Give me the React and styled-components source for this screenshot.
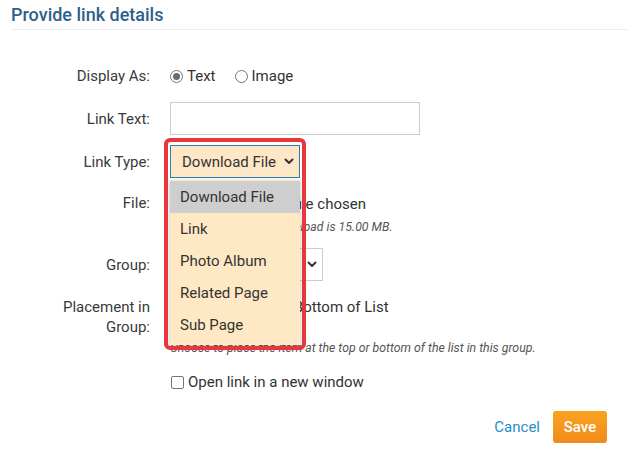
import React from 'react'
import styled, { createGlobalStyle } from 'styled-components'

const linkTypes = ['Download File', 'Link', 'Photo Album', 'Related Page', 'Sub Page']

const Chevron = () => (
  <svg width="10" height="7" viewBox="0 0 10 7">
    <path d="M1.5 1.5 L5 5 L8.5 1.5" fill="none" stroke="#333" strokeWidth="2" strokeLinecap="round" strokeLinejoin="round" />
  </svg>
)

const Radio = ({ checked, label }) => (
  <RadioLabel>
    <RadioDot $checked={checked} />
    {label}
  </RadioLabel>
)

export default () => {
  return (
    <Page>
      <GlobalStyle />
      <Header>
        <Title>Provide link details</Title>
      </Header>

      <Row $top={36} $align="center">
        <Label>Display As:</Label>
        <Inline $gap={19}>
          <Radio checked label="Text" />
          <Radio label="Image" />
        </Inline>
      </Row>

      <Row $top={16} $align="center">
        <Label>Link Text:</Label>
        <TextInput />
      </Row>

      <Row $top={10} $align="center">
        <Label>Link Type:</Label>
        <SelectWrap>
          <Select $width={130} $focused>
            <span>Download File</span>
            <Chevron />
          </Select>
          <Menu>
            {linkTypes.map((t, i) => (
              <MenuItem key={t} $active={i === 0}>{t}</MenuItem>
            ))}
          </Menu>
          <Highlight />
        </SelectWrap>
      </Row>

      <Row $top={15} $align="start">
        <Label>File:</Label>
        <div>
          <Inline $gap={7}>
            <FileButton>Choose File</FileButton>
            <span>No file chosen</span>
          </Inline>
          <Help $top={5}>Maximum file size for upload is 15.00 MB.</Help>
        </div>
      </Row>

      <Row $top={13} $align="center">
        <Label>Group:</Label>
        <Select $width={153}>
          <span>General</span>
          <Chevron />
        </Select>
      </Row>

      <Row $top={16} $align="start">
        <Label>Placement in<br />Group:</Label>
        <div>
          <Inline $gap={19}>
            <Radio checked label="Top of List" />
            <Radio label="Bottom of List" />
          </Inline>
          <Help $top={24}>Choose to place the item at the top or bottom of the list in this group.</Help>
        </div>
      </Row>

      <Row $top={16} $align="center">
        <span />
        <CheckLabel>
          <CheckBox />
          Open link in a new window
        </CheckLabel>
      </Row>

      <Actions>
        <CancelLink href="#">Cancel</CancelLink>
        <SaveButton>Save</SaveButton>
      </Actions>
    </Page>
  )
}

const GlobalStyle = createGlobalStyle`
  body {
    margin: 0;
    background: #fff;
    font-family: Roboto, "Liberation Sans", Arial, sans-serif;
    color: #333;
  }
`

const Page = styled.div`
  width: 628px;
  height: 465px;
  font-size: 15px;
  overflow: hidden;
`

const Header = styled.div`
  margin-left: 11px;
  padding: 4px 0 3px;
  border-bottom: 1px solid #ececec;
`

const Title = styled.h2`
  margin: 0;
  font-size: 18px;
  line-height: 22px;
  font-weight: 500;
  color: #2f5f8a;
`

const Row = styled.div`
  display: grid;
  grid-template-columns: 140px 1fr;
  column-gap: 20px;
  align-items: ${p => p.$align};
  padding-left: 10px;
  margin-top: ${p => p.$top}px;
  line-height: 20px;
`

const Label = styled.div`
  text-align: right;
  color: #3a3a3a;
  line-height: 20px;
`

const Inline = styled.div`
  display: flex;
  align-items: center;
  gap: ${p => p.$gap}px;
  line-height: 20px;
`

const RadioLabel = styled.label`
  display: flex;
  align-items: center;
  gap: 4px;
`

const RadioDot = styled.span`
  width: 11px;
  height: 11px;
  border-radius: 50%;
  border: 1px solid #767676;
  background: #fff;
  position: relative;
  &::after {
    content: '';
    display: ${p => (p.$checked ? 'block' : 'none')};
    position: absolute;
    top: 2px;
    left: 2px;
    width: 7px;
    height: 7px;
    border-radius: 50%;
    background: #6b6b6b;
  }
`

const TextInput = styled.div`
  width: 248px;
  height: 31px;
  border: 1px solid #ccc;
  background: #fff;
`

const SelectWrap = styled.div`
  position: relative;
  width: 130px;
`

const Select = styled.div`
  box-sizing: border-box;
  width: ${p => p.$width}px;
  height: 33px;
  display: flex;
  align-items: center;
  justify-content: space-between;
  padding: 0 5px 0 11px;
  border: 1px solid ${p => (p.$focused ? '#2c7fa3' : '#ccc')};
  background: ${p => (p.$focused ? '#fde7c6' : '#fff')};
  color: #333;
`

const Menu = styled.div`
  position: absolute;
  top: 35px;
  left: 0;
  width: 130px;
  padding: 1px 0 4px;
  background: #ffe8c4;
  box-shadow: 0 1px 4px rgba(0, 0, 0, 0.25);
  z-index: 2;
`

const MenuItem = styled.div`
  height: 32px;
  line-height: 32px;
  padding-left: 10px;
  background: ${p => (p.$active ? '#cecece' : 'transparent')};
  color: #333;
`

const Highlight = styled.div`
  position: absolute;
  top: -7px;
  left: -6px;
  width: 134px;
  height: 204px;
  border: 4px solid #e8363d;
  border-radius: 6px;
  z-index: 3;
  pointer-events: none;
`

const FileButton = styled.span`
  padding: 0 12px;
  border: 1px solid #767676;
  border-radius: 2px;
  background: #efefef;
  font-size: 13px;
  line-height: 20px;
`

const Help = styled.div`
  margin-top: ${p => p.$top}px;
  font-size: 12.3px;
  line-height: 15px;
  font-style: italic;
  color: #555;
`

const CheckLabel = styled.label`
  display: flex;
  align-items: center;
  gap: 4px;
  margin-left: 1px;
`

const CheckBox = styled.span`
  width: 11px;
  height: 11px;
  border: 1px solid #767676;
  border-radius: 2px;
  background: #fff;
`

const Actions = styled.div`
  display: flex;
  justify-content: flex-end;
  align-items: center;
  gap: 13px;
  margin-top: 19px;
  padding-right: 21px;
`

const CancelLink = styled.a`
  color: #2a8dc9;
  text-decoration: none;
  font-size: 15px;
`

const SaveButton = styled.button`
  width: 54px;
  height: 32px;
  border: none;
  border-radius: 3px;
  background: linear-gradient(#f8a41e, #f28a1e);
  color: #fff;
  font-family: inherit;
  font-size: 15px;
  font-weight: 500;
`
